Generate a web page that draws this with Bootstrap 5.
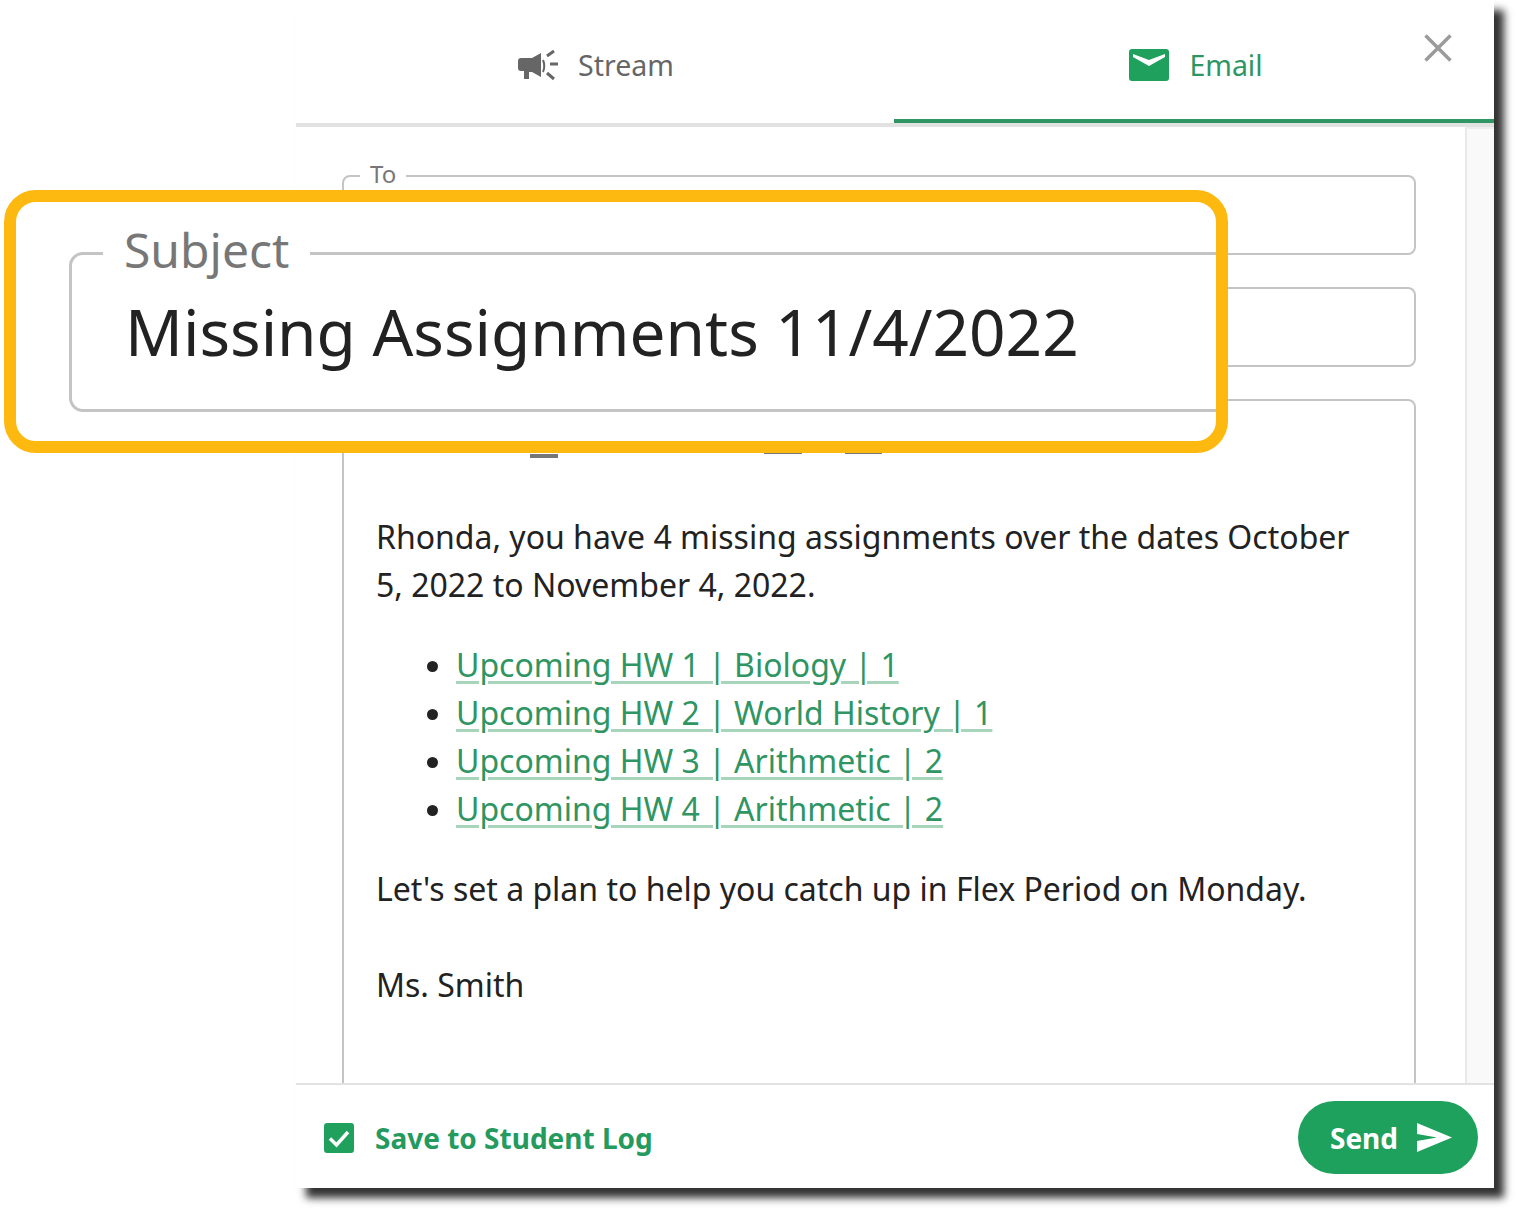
<!DOCTYPE html>
<html lang="en">
<head>
    <meta charset="UTF-8">
    <meta name="viewport" content="width=device-width, initial-scale=1.0">
    <title>Email</title>
    <link href="https://cdn.jsdelivr.net/npm/bootstrap@5.3.0/dist/css/bootstrap.min.css" rel="stylesheet">
    <style>
        body {
            background: #fff;
            font-family: "Noto Sans", sans-serif;
            color: #222;
            height: 1208px;
            overflow: hidden;
        }
        .page-wrap {
            position: relative;
            height: 1208px;
        }
        .panel {
            margin-left: 296px;
            width: 1198px;
            height: 1188px;
            background: #fff;
            box-shadow: 10px 10px 8px rgba(0, 0, 0, .8);
        }
        .tab-bar {
            flex: 0 0 127px;
            border-bottom: 4px solid #e2e2e2;
        }
        .tab-item {
            flex: 0 0 598px;
            gap: 20px;
            padding: 11px 0 0 2px;
            font-size: 28.5px;
            color: #666;
            text-decoration: none;
            border-bottom: 4px solid transparent;
        }
        .tab-item.tab-on {
            flex: 1 1 auto;
            padding-left: 4px;
            color: #2e9563;
            border-bottom-color: #2e9563;
        }
        .close-x {
            position: absolute;
            left: 1424px;
            top: 34px;
            line-height: 0;
        }
        .form-zone {
            flex: 1 1 auto;
            min-height: 0;
            overflow: hidden;
        }
        .form-scroll {
            flex: 1 1 auto;
            padding: 35px 49px 0 46px;
        }
        .side-track {
            flex: 0 0 29px;
            background: #f9f9f9;
            border-left: 2px solid #e9e9e9;
            border-top: 2px solid #eee;
        }
        .box-field {
            border: 2px solid #c4c4c4;
            border-radius: 8px;
            margin-top: 32px;
            height: 80px;
        }
        .box-field legend {
            float: none;
            width: auto;
            margin: 0 0 0 16px;
            padding: 0 10px 4px;
            font-size: 24px;
            line-height: 1;
            color: #777;
        }
        .box-first {
            margin-top: 0;
            height: 93px;
        }
        .box-body {
            height: 800px;
            padding: 0 32px;
            font-size: 32px;
            line-height: 48px;
        }
        .edit-tools {
            height: 57px;
            margin-bottom: 55px;
            align-items: flex-end;
        }
        .tool-bit {
            height: 6px;
            margin-bottom: 4px;
            background: #777;
        }
        .tool-a { width: 28px; height: 4px; margin-bottom: 0; margin-left: 154px; }
        .tool-b { width: 38px; margin-left: 206px; }
        .tool-c { width: 37px; margin-left: 43px; }
        .box-body p {
            margin-bottom: 32px;
        }
        .box-body p.gap-after {
            margin-bottom: 48px;
        }
        .box-body ul {
            margin-bottom: 32px;
            padding-left: 80px;
        }
        .box-body a {
            color: #2e9563;
            text-decoration: underline 3px #a9d4bc;
            text-underline-offset: 4px;
        }
        .foot-bar {
            flex: 0 0 105px;
            border-top: 2px solid #e2e2e2;
            padding: 2px 16px 0 28px;
        }
        .save-check {
            gap: 21px;
            font-size: 28px;
            font-weight: 700;
            color: #249a5e;
        }
        .send-btn {
            width: 180px;
            height: 73px;
            gap: 19px;
            padding: 0 0 0 6px;
            border: 0;
            background: #1ea15d;
            color: #fff;
            font-size: 28px;
            font-weight: 700;
        }
        .send-btn:hover {
            background: #1ea15d;
            color: #fff;
        }
        .callout {
            position: absolute;
            left: 4px;
            top: 190px;
            width: 1224px;
            height: 263px;
            padding: 24px 0 0 53px;
            background: #fff;
            border: 12px solid #fdb90f;
            border-radius: 32px;
            overflow: hidden;
        }
        .callout fieldset {
            width: 1300px;
            height: 186px;
            border: 3px solid #c4c4c4;
            border-radius: 14px;
        }
        .callout legend {
            float: none;
            width: auto;
            margin: 0 0 0 31px;
            padding: 0 21px 6px;
            font-size: 48px;
            line-height: 1;
            color: #777;
        }
        .callout-value {
            padding: 10px 0 0 53px;
            font-size: 63.9px;
            line-height: 1.3;
            color: #222;
        }
    </style>
</head>
<body>
    <div class="page-wrap">
        <div class="panel d-flex flex-column">
            <div class="tab-bar d-flex">
                <a href="#" class="tab-item d-flex align-items-center justify-content-center">
                    <svg width="40" height="32" viewBox="0 0 40 32" fill="#666">
                        <path d="M3 9H14L23 4V28L14 23H11V30H6V22H3Q0 22 0 19V12Q0 9 3 9Z"/>
                        <path d="M25 11Q27.500 17 25 23" fill="none" stroke="#666" stroke-width="2"/>
                        <path d="M29 7L36 2M32 15H40M29 24L36 30" fill="none" stroke="#666" stroke-width="3"/>
                    </svg>
                    <span>Stream</span>
                </a>
                <a href="#" class="tab-item tab-on d-flex align-items-center justify-content-center">
                    <svg width="40" height="32" viewBox="0 0 40 32">
                        <rect width="40" height="32" rx="3" fill="#20a05d"/>
                        <path d="M4 5L20 11L36 5V8L20 17L4 8Z" fill="#fff"/>
                    </svg>
                    <span>Email</span>
                </a>
            </div>
            <div class="close-x">
                <svg width="28" height="28" viewBox="0 0 28 28">
                    <path d="M1.500 1.500L26.500 26.500M26.500 1.500L1.500 26.500" fill="none" stroke="#9b9b9b" stroke-width="3.500"/>
                </svg>
            </div>

            <div class="form-zone d-flex">
                <div class="form-scroll">
                    <fieldset class="box-field box-first">
                        <legend>To</legend>
                    </fieldset>
                    <fieldset class="box-field"></fieldset>
                    <fieldset class="box-field box-body">
                        <div class="edit-tools d-flex">
                            <span class="tool-bit tool-a"></span>
                            <span class="tool-bit tool-b"></span>
                            <span class="tool-bit tool-c"></span>
                        </div>
                        <p>Rhonda, you have 4 missing assignments over the dates October 5, 2022 to November 4, 2022.</p>
                        <ul>
                            <li><a href="#">Upcoming HW 1 | Biology | 1</a></li>
                            <li><a href="#">Upcoming HW 2 | World History | 1</a></li>
                            <li><a href="#">Upcoming HW 3 | Arithmetic | 2</a></li>
                            <li><a href="#">Upcoming HW 4 | Arithmetic | 2</a></li>
                        </ul>
                        <p class="gap-after">Let's set a plan to help you catch up in Flex Period on Monday.</p>
                        <p>Ms. Smith</p>
                    </fieldset>
                </div>
                <div class="side-track"></div>
            </div>

            <div class="foot-bar d-flex align-items-center justify-content-between">
                <label class="save-check d-flex align-items-center">
                    <svg width="30" height="30" viewBox="0 0 30 30">
                        <rect width="30" height="30" rx="3" fill="#20a05d"/>
                        <path d="M6 15.500L12.500 22L24 9" fill="none" stroke="#fff" stroke-width="3.500"/>
                    </svg>
                    <span>Save to Student Log</span>
                </label>
                <button type="button" class="btn send-btn rounded-pill d-flex align-items-center justify-content-center">
                    <span>Send</span>
                    <svg width="35" height="29" viewBox="0 0 35 29">
                        <path d="M0 0L35 14.500L0 29V18L20 14.500L0 11Z" fill="#fff"/>
                    </svg>
                </button>
            </div>
        </div>

        <div class="callout">
            <fieldset>
                <legend>Subject</legend>
                <div class="callout-value">Missing Assignments 11/4/2022</div>
            </fieldset>
        </div>
    </div>
    <script src="https://cdn.jsdelivr.net/npm/bootstrap@5.3.0/dist/js/bootstrap.bundle.min.js"></script>
</body>
</html>
